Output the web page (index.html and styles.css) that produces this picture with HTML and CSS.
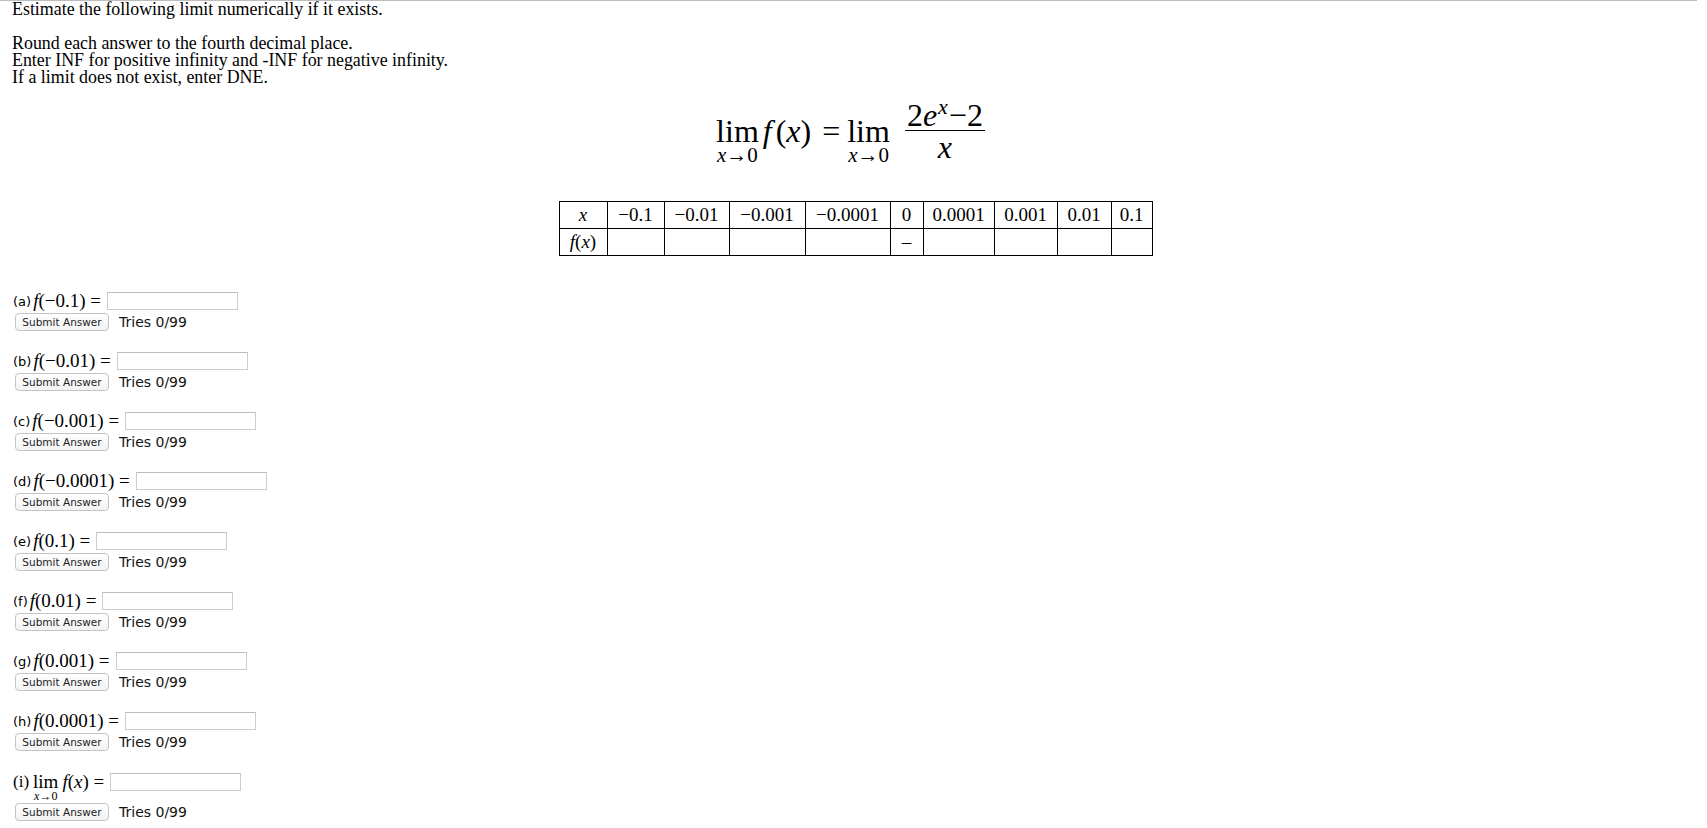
FILE: index.html
```html
<!DOCTYPE html>
<html lang="en">
<head>
<meta charset="utf-8">
<title>Limit estimate</title>
<link rel="stylesheet" href="styles.css">
</head>
<body>
<div class="sheet">
  <div class="intro">Estimate the following limit numerically if it exists.<br><br>Round each answer to the fourth decimal place.<br>Enter INF for positive infinity and -INF for negative infinity.<br>If a limit does not exist, enter DNE.</div>

  <div class="formula">
    <span class="lim"><span class="lim-op">lim</span><span class="lim-sub"><i>x</i>→0</span></span><span class="fx"><i class="ff">f</i>(<i>x</i>)</span><span class="eq">=</span><span class="lim"><span class="lim-op">lim</span><span class="lim-sub"><i>x</i>→0</span></span><span class="frac"><span class="num">2<i>e</i><sup><i>x</i></sup><span class="minus">−</span>2</span><span class="den"><i>x</i></span></span>
  </div>

  <div class="table-wrap">
    <table class="values">
      <colgroup>
        <col class="w1"><col class="w2"><col class="w3"><col class="w4"><col class="w5"><col class="w6"><col class="w7"><col class="w8"><col class="w9"><col class="w10">
      </colgroup>
      <tr><td><i>x</i></td><td>−0.1</td><td>−0.01</td><td>−0.001</td><td>−0.0001</td><td>0</td><td>0.0001</td><td>0.001</td><td>0.01</td><td>0.1</td></tr>
      <tr><td><i>f</i>(<i>x</i>)</td><td></td><td></td><td></td><td></td><td>–</td><td></td><td></td><td></td><td></td></tr>
    </table>
  </div>

  <div class="parts">
    <div class="part">
      <div class="q"><span class="tag">(a)</span><span class="m"><i>f</i>(−0.1) =</span><input class="ans" type="text"></div>
      <div class="act"><button class="submit">Submit Answer</button><span class="tries">Tries 0/99</span></div>
    </div>
    <div class="part">
      <div class="q"><span class="tag">(b)</span><span class="m"><i>f</i>(−0.01) =</span><input class="ans" type="text"></div>
      <div class="act"><button class="submit">Submit Answer</button><span class="tries">Tries 0/99</span></div>
    </div>
    <div class="part">
      <div class="q"><span class="tag">(c)</span><span class="m"><i>f</i>(−0.001) =</span><input class="ans" type="text"></div>
      <div class="act"><button class="submit">Submit Answer</button><span class="tries">Tries 0/99</span></div>
    </div>
    <div class="part">
      <div class="q"><span class="tag">(d)</span><span class="m"><i>f</i>(−0.0001) =</span><input class="ans" type="text"></div>
      <div class="act"><button class="submit">Submit Answer</button><span class="tries">Tries 0/99</span></div>
    </div>
    <div class="part">
      <div class="q"><span class="tag">(e)</span><span class="m"><i>f</i>(0.1) =</span><input class="ans" type="text"></div>
      <div class="act"><button class="submit">Submit Answer</button><span class="tries">Tries 0/99</span></div>
    </div>
    <div class="part">
      <div class="q"><span class="tag">(f)</span><span class="m"><i>f</i>(0.01) =</span><input class="ans" type="text"></div>
      <div class="act"><button class="submit">Submit Answer</button><span class="tries">Tries 0/99</span></div>
    </div>
    <div class="part">
      <div class="q"><span class="tag">(g)</span><span class="m"><i>f</i>(0.001) =</span><input class="ans" type="text"></div>
      <div class="act"><button class="submit">Submit Answer</button><span class="tries">Tries 0/99</span></div>
    </div>
    <div class="part">
      <div class="q"><span class="tag">(h)</span><span class="m"><i>f</i>(0.0001) =</span><input class="ans" type="text"></div>
      <div class="act"><button class="submit">Submit Answer</button><span class="tries">Tries 0/99</span></div>
    </div>
    <div class="part part-lim">
      <div class="q q-lim"><span class="tag tag-serif">(i)</span><span class="small-lim"><span class="small-lim-op">lim</span><span class="small-lim-sub"><i>x</i>→0</span></span><span class="m"><i>f</i>(<i>x</i>) =</span><input class="ans" type="text"></div>
      <div class="act"><button class="submit">Submit Answer</button><span class="tries">Tries 0/99</span></div>
    </div>
  </div>
</div>
</body>
</html>
```

FILE: styles.css
```css
html, body {
  margin: 0;
  padding: 0;
  background: #ffffff;
  color: #000000;
}

.sheet {
  margin-right: 10px;
  border-top: 1px solid #bdbdbd;
  padding: 0 12px 0 12px;
}

.intro {
  font-family: "Liberation Serif", "DejaVu Serif", serif;
  font-size: 17.9px;
  line-height: 17px;
}

i {
  font-family: "Liberation Serif", "DejaVu Serif", serif;
  font-style: italic;
}

.formula {
  margin-top: 14px;
  text-align: center;
  font-family: "Liberation Serif", "DejaVu Serif", serif;
  font-size: 32px;
  line-height: 28px;
  padding-left: 4px;
}

.lim {
  display: inline-flex;
  flex-direction: column;
  align-items: center;
  vertical-align: baseline;
}

.lim-op {
  line-height: 30px;
}

.lim-sub {
  font-size: 21px;
  line-height: 18px;
  white-space: nowrap;
}

.fx {
  margin-left: 4px;
}

.ff {
  padding-right: 4px;
}

.eq {
  margin: 0 7px 0 11px;
}

.frac {
  display: inline-flex;
  flex-direction: column;
  align-items: center;
  vertical-align: 16px;
  margin-left: 15px;
}

.num {
  line-height: 30px;
  padding: 0 2px;
  border-bottom: 1.5px solid #000;
  white-space: nowrap;
}

.num sup {
  font-size: 22px;
  line-height: 0;
  vertical-align: 12px;
  margin-left: 1px;
}

.minus {
  margin-left: 1px;
}

.den {
  line-height: 31px;
  padding-top: 1px;
}

.table-wrap {
  margin-top: 37px;
  padding-left: 14px;
}

.values {
  margin: 0 auto;
  border-collapse: collapse;
  table-layout: fixed;
  font-family: "Liberation Serif", "DejaVu Serif", serif;
  font-size: 19px;
}

.values td {
  border: 1px solid #000;
  height: 26px;
  padding: 0;
  text-align: center;
  line-height: 20px;
  white-space: nowrap;
}

.w1 { width: 48px; }
.w2 { width: 57px; }
.w3 { width: 65px; }
.w4 { width: 76px; }
.w5 { width: 85px; }
.w6 { width: 33px; }
.w7 { width: 71px; }
.w8 { width: 63px; }
.w9 { width: 54px; }
.w10 { width: 41px; }

.parts {
  margin-top: 35px;
}

.part {
  margin-bottom: 20px;
}

.q {
  display: flex;
  align-items: center;
  height: 20px;
  white-space: nowrap;
}

.tag {
  font-family: "DejaVu Sans", "Liberation Sans", sans-serif;
  font-size: 13px;
  margin-left: 1px;
  margin-right: 2px;
}

.m {
  font-family: "Liberation Serif", "DejaVu Serif", serif;
  font-size: 19px;
  margin-right: 6px;
}

.ans {
  box-sizing: border-box;
  width: 131px;
  height: 18px;
  margin: 0;
  padding: 0 3px;
  border: 1px solid #cccccc;
  border-top-color: #bcbcbc;
  background: #ffffff;
  font-size: 12px;
}

.act {
  display: flex;
  align-items: center;
  margin-top: 2px;
  height: 18px;
}

.submit {
  box-sizing: border-box;
  margin: 0 0 0 3px;
  width: 94px;
  height: 18px;
  padding: 0;
  border: 1px solid #c4c4c4;
  border-radius: 4px;
  background: linear-gradient(#ffffff, #f3f3f3);
  font-family: "DejaVu Sans", "Liberation Sans", sans-serif;
  font-size: 10.5px;
  color: #222222;
  line-height: 16px;
}

.tries {
  margin-left: 10px;
  font-family: "DejaVu Sans", "Liberation Sans", sans-serif;
  font-size: 14px;
  color: #111111;
}

.part-lim .q-lim {
  height: auto;
  align-items: flex-start;
  padding-top: 2px;
}

.q-lim .tag,
.q-lim .m {
  line-height: 18px;
}

.tag-serif {
  font-family: "Liberation Serif", "DejaVu Serif", serif;
  font-size: 17px;
  margin-right: 4px;
}

.small-lim {
  display: inline-flex;
  flex-direction: column;
  align-items: center;
  font-family: "Liberation Serif", "DejaVu Serif", serif;
  margin-right: 4px;
}

.small-lim-op {
  font-size: 19px;
  line-height: 18px;
}

.small-lim-sub {
  font-size: 12px;
  line-height: 10px;
  white-space: nowrap;
}
```
